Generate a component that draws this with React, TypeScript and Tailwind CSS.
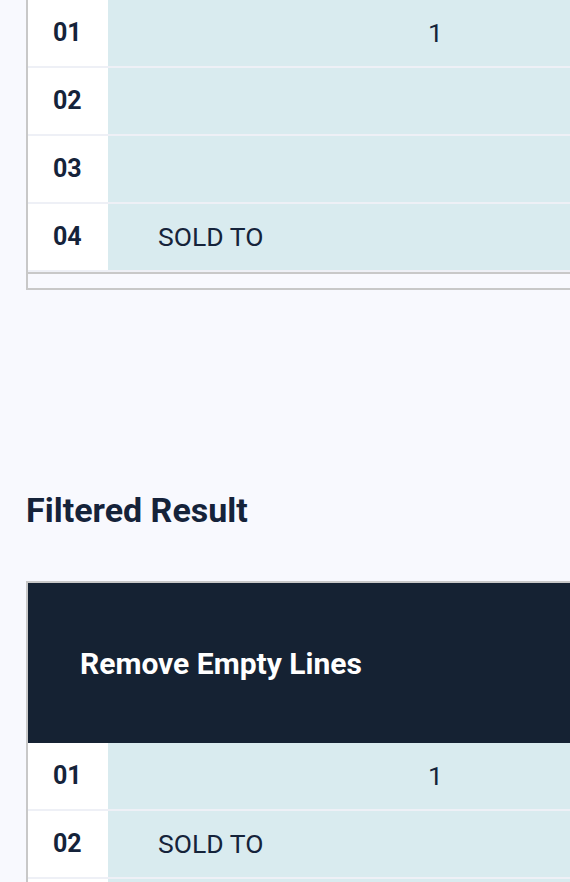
type Row = { n: string; label?: string; value?: string }

const topRows: Row[] = [
  { n: "01", value: "1" },
  { n: "02" },
  { n: "03" },
  { n: "04", label: "SOLD TO" },
]

const resultRows: Row[] = [
  { n: "01", value: "1" },
  { n: "02", label: "SOLD TO" },
  { n: "03" },
]

function DataRow({ row }: { row: Row }) {
  return (
    <div className="flex h-[68px] border-b-2 border-[#eef0f6]">
      <div className="flex w-[80px] shrink-0 items-center bg-white pl-[25px] text-[25px] font-bold text-[#15233a]">
        {row.n}
      </div>
      <div className="flex flex-1 items-center bg-[#d9ebef] text-[26.5px] text-[#15233a]">
        <span className="w-[320px] shrink-0 pl-[50px]">{row.label}</span>
        <span>{row.value}</span>
      </div>
    </div>
  )
}

export default function App() {
  return (
    <div className="min-h-screen overflow-hidden bg-[#f8f9fe] pl-[26px] font-['Roboto',sans-serif]">
      <div className="border-b-2 border-l-2 border-[#c8c8c8]">
        {topRows.map((r) => (
          <DataRow key={r.n} row={r} />
        ))}
        <div className="h-[16px] border-t-2 border-[#c8c8c8]" />
      </div>

      <h2 className="mt-[200px] text-[34px] leading-[40px] font-bold text-[#15233a]">Filtered Result</h2>

      <div className="mt-[51px] border-t-2 border-l-2 border-[#c8c8c8]">
        <div className="flex h-[160px] items-center bg-[#152233] pl-[52px] text-[30px] font-bold text-white">
          Remove Empty Lines
        </div>
        {resultRows.map((r) => (
          <DataRow key={r.n} row={r} />
        ))}
      </div>
    </div>
  )
}
